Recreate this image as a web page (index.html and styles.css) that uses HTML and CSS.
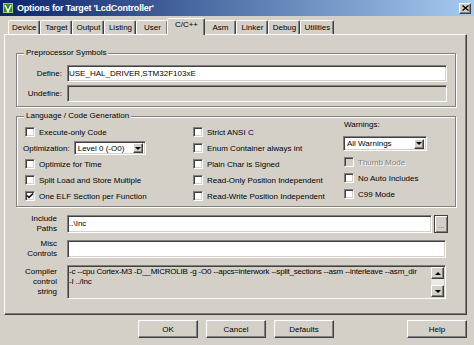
FILE: index.html
```html
<!DOCTYPE html>
<html lang="en">
<head>
  <meta charset="UTF-8" />
  <meta name="viewport" content="width=device-width, initial-scale=1.0" />
  <title>Options for Target 'LcdController'</title>
  <link rel="stylesheet" href="styles.css">
</head>
<body>
  <div class="dialog">
    <div class="titlebar">
      <svg class="app-icon" width="10" height="10" viewBox="0 0 10 10">
        <rect width="10" height="10" fill="#2f8a2f"/>
        <rect x="0.5" y="0.5" width="9" height="9" fill="none" stroke="#9fd27a"/>
        <path d="M2 2 L5 8.5 L8 2" fill="none" stroke="#ffffe0" stroke-width="1.6"/>
      </svg>
      <span class="title">Options for Target 'LcdController'</span>
      <span class="close">
        <svg width="7" height="6" viewBox="0 0 7 6"><path d="M0.5 0.5 L6.5 5.5 M6.5 0.5 L0.5 5.5" stroke="#000" stroke-width="1.4"/></svg>
      </span>
    </div>

    <div class="tabs">
      <div class="tab">Device</div>
      <div class="tab">Target</div>
      <div class="tab">Output</div>
      <div class="tab">Listing</div>
      <div class="tab">User</div>
      <div class="tab active">C/C++</div>
      <div class="tab">Asm</div>
      <div class="tab">Linker</div>
      <div class="tab">Debug</div>
      <div class="tab">Utilities</div>
    </div>

    <div class="panel">
      <fieldset class="group group-pre">
        <legend>Preprocessor Symbols</legend>
        <div class="field">
          <span class="field-label">Define:</span>
          <div class="edit">USE_HAL_DRIVER,STM32F103xE</div>
        </div>
        <div class="field">
          <span class="field-label">Undefine:</span>
          <div class="edit readonly"></div>
        </div>
      </fieldset>

      <fieldset class="group group-lang">
        <legend>Language / Code Generation</legend>
        <div class="lang">
          <div class="col col-a">
            <div class="check"><span class="box"></span>Execute-only Code</div>
            <div class="opt">
              <span class="opt-label">Optimization:</span>
              <div class="combo combo-level">
                <span class="combo-text">Level 0 (-O0)</span>
                <span class="drop"><span class="tri-down"></span></span>
              </div>
            </div>
            <div class="check"><span class="box"></span>Optimize for Time</div>
            <div class="check"><span class="box"></span>Split Load and Store Multiple</div>
            <div class="check">
              <span class="box"><svg width="8" height="8" viewBox="0 0 8 8"><path d="M1 3.5 L3 5.5 L7 1.5" fill="none" stroke="#000" stroke-width="1.5"/></svg></span>One ELF Section per Function
            </div>
          </div>
          <div class="col col-b">
            <div class="check"><span class="box"></span>Strict ANSI C</div>
            <div class="check"><span class="box"></span>Enum Container always int</div>
            <div class="check"><span class="box"></span>Plain Char is Signed</div>
            <div class="check"><span class="box"></span>Read-Only Position Independent</div>
            <div class="check"><span class="box"></span>Read-Write Position Independent</div>
          </div>
          <div class="col col-c">
            <span class="warn-label">Warnings:</span>
            <div class="combo combo-warn">
              <span class="combo-text">All Warnings</span>
              <span class="drop"><span class="tri-down"></span></span>
            </div>
            <div class="check-list">
              <div class="check disabled"><span class="box"></span>Thumb Mode</div>
              <div class="check"><span class="box"></span>No Auto Includes</div>
              <div class="check"><span class="box"></span>C99 Mode</div>
            </div>
          </div>
        </div>
      </fieldset>

      <div class="ctl ctl-include">
        <span class="ctl-label">Include<br>Paths</span>
        <div class="edit">..\Inc</div>
        <span class="browse">...</span>
      </div>
      <div class="ctl ctl-misc">
        <span class="ctl-label">Misc<br>Controls</span>
        <div class="edit"></div>
      </div>
      <div class="ctl ctl-string">
        <span class="ctl-label">Compiler<br>control<br>string</span>
        <div class="edit readonly memo">
          <div class="memo-text">-c --cpu Cortex-M3 -D__MICROLIB -g -O0 --apcs=interwork --split_sections --asm --interleave --asm_dir
-I ../Inc</div>
          <div class="scroll">
            <span class="scroll-btn"><span class="tri-up"></span></span>
            <span class="scroll-track"></span>
            <span class="scroll-btn"><span class="tri-down"></span></span>
          </div>
        </div>
      </div>
    </div>

    <div class="buttons">
      <span class="btn">OK</span>
      <span class="btn">Cancel</span>
      <span class="btn btn-defaults">Defaults</span>
      <span class="btn btn-help">Help</span>
    </div>
  </div>
</body>
</html>
```

FILE: styles.css
```css
:root{
  --face:#d4d0c8;
  --shadow:#808080;
  --dark:#404040;
  --light:#ffffff;
}
*{box-sizing:border-box}
body{margin:0;background:var(--face);font-family:'Liberation Sans',Arial,sans-serif;font-size:8px;color:#000}

.dialog{width:474px;height:345px;display:flex;flex-direction:column;background:var(--face);overflow:hidden}

/* title bar */
.titlebar{height:16px;flex:none;display:flex;align-items:center;padding:0 3px;background:linear-gradient(to right,#0a246a,#a6caf0)}
.app-icon{flex:none;margin-right:4px}
.title{flex:1;color:#fff;font-weight:700;font-size:9px;letter-spacing:-0.2px;white-space:nowrap}
.close{width:12px;height:11px;flex:none;background:var(--face);border:1px solid;border-color:var(--light) var(--dark) var(--dark) var(--light);box-shadow:inset -1px -1px var(--shadow);display:flex;align-items:center;justify-content:center}

/* tabs */
.tabs{height:18px;flex:none;display:flex;align-items:flex-end;padding-left:8px;position:relative;z-index:1}
.tab{height:14px;min-width:32px;padding:2px 3px 0;text-align:center;line-height:10px;white-space:nowrap;background:var(--face);border:1px solid;border-bottom:0;border-color:var(--light) var(--dark) transparent var(--light);border-radius:2px 2px 0 0;box-shadow:inset -1px 0 var(--shadow)}
.tab.active{height:17px;min-width:38px;margin:0 -1px -1px;padding-top:1px;position:relative}

/* tab page */
.panel{flex:none;height:281px;margin:0 7px 0 4px;padding:13px 10px 0 11px;border:1px solid;border-color:var(--light) var(--dark) var(--dark) var(--light);box-shadow:inset -1px -1px var(--shadow)}

.group{margin:0;padding:0;min-width:0;border:1px solid var(--shadow);box-shadow:1px 1px 0 var(--light),inset 1px 1px 0 var(--light)}
.group legend{margin-left:7px;padding:0 2px;line-height:10px;background:var(--face)}

.group-pre{padding-bottom:4px}
.field{display:flex;align-items:center;height:17px;padding-right:8px;margin-top:3px}
.field:first-of-type{margin-top:7px}
.field-label{width:45px;margin-right:5px;text-align:right}

.edit{flex:1;min-width:0;height:17px;padding:0 1px;line-height:15px;white-space:nowrap;overflow:hidden;background:#fff;border:1px solid;border-color:var(--shadow) var(--light) var(--light) var(--shadow);box-shadow:inset 1px 1px var(--dark),inset -1px -1px var(--face)}
.edit.readonly{background:var(--face)}

.group-lang{margin-top:4px}
.lang{display:grid;grid-template-columns:170px 150px 1fr;padding:0 0 2px 6px}
.col{display:flex;flex-direction:column}
.col-a,.col-b{padding-top:3px}
.col-a .check{margin-left:2px}
.col-c{margin-top:-1px}

.check{height:16px;display:flex;align-items:center;white-space:nowrap}
.box{width:10px;height:10px;flex:none;margin-right:4px;display:flex;align-items:center;justify-content:center;background:#fff;border:1px solid;border-color:var(--shadow) var(--light) var(--light) var(--shadow);box-shadow:inset 1px 1px var(--dark),inset -1px -1px var(--face)}
.check.disabled{color:var(--shadow);text-shadow:1px 1px 0 var(--light)}
.check.disabled .box{background:var(--face)}

.opt{height:16px;display:flex;align-items:center}
.opt-label{margin-right:4px}
.combo{display:flex;align-items:center;padding:0 2px 0 3px;background:#fff;border:1px solid;border-color:var(--shadow) var(--light) var(--light) var(--shadow);box-shadow:inset 1px 1px var(--dark),inset -1px -1px var(--face)}
.combo-level{width:72px;height:14px}
.combo-warn{width:84px;height:15px}
.combo-text{flex:1;white-space:nowrap}
.drop{width:10px;height:10px;flex:none;display:flex;align-items:center;justify-content:center;background:var(--face);border:1px solid;border-color:var(--light) var(--dark) var(--dark) var(--light);box-shadow:inset -1px -1px var(--shadow)}
.tri-down{width:0;height:0;border-left:3px solid transparent;border-right:3px solid transparent;border-top:3px solid #000}
.tri-up{width:0;height:0;border-left:3px solid transparent;border-right:3px solid transparent;border-bottom:3px solid #000}

.warn-label{line-height:10px;margin:0 0 6px 1px}
.check-list{margin-top:3px;margin-left:1px}

/* lower controls */
.ctl{display:flex;align-items:center;margin-right:10px}
.ctl-label{width:41px;margin-right:10px;text-align:right;line-height:10px;flex:none}
.ctl .edit{height:18px;line-height:16px}
.ctl-include{margin-top:7px;margin-right:8px}
.ctl-misc{margin-top:5px}
.ctl-string{margin-top:6px}
.browse{width:14px;height:18px;flex:none;margin-left:2px;display:flex;align-items:flex-end;justify-content:center;padding-bottom:3px;line-height:6px;color:#555;background:var(--face);border:1px solid var(--dark);box-shadow:inset 1px 1px var(--light),inset -1px -1px var(--shadow)}

.ctl .memo{height:34px;display:flex;padding:0;white-space:normal}
.memo-text{flex:1;padding:1px 0 0 1px;line-height:10px;letter-spacing:-0.2px;white-space:pre;overflow:hidden}
.scroll{width:13px;flex:none;display:flex;flex-direction:column;margin:1px 1px 1px 2px}
.scroll-btn{height:12px;flex:none;display:flex;align-items:center;justify-content:center;background:var(--face);border:1px solid;border-color:var(--light) var(--dark) var(--dark) var(--light);box-shadow:inset -1px -1px var(--shadow)}
.scroll-track{flex:1;background:#ebe9e4}

/* dialog buttons */
.buttons{height:18px;flex:none;display:flex;margin-top:5px;padding:0 7px 0 138px}
.btn{width:60px;height:18px;display:flex;align-items:center;justify-content:center;background:var(--face);border:1px solid;border-color:var(--light) var(--dark) var(--dark) var(--light);box-shadow:inset -1px -1px var(--shadow)}
.btn + .btn{margin-left:8px}
.btn-defaults{margin-left:7px}
.btn.btn-help{margin-left:auto}
```
